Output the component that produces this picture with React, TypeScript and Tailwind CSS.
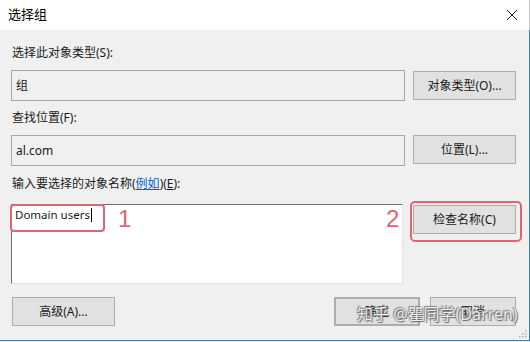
import React from "react";

const font = { fontFamily: '"Noto Sans", "Noto Sans CJK SC", sans-serif' };

function Btn({ children, className = "" }: { children: React.ReactNode; className?: string }) {
  return (
    <div
      className={`flex items-center justify-center bg-[#e1e1e1] border border-[#adadad] text-[12px] text-[#1a1a1a] ${className}`}
    >
      {children}
    </div>
  );
}

export default function App() {
  return (
    <div className="relative w-[530px] h-[342px] bg-[#f0f0f0] overflow-hidden" style={font}>
      {/* title bar */}
      <div className="h-[30px] bg-white flex items-center justify-between pl-[8px] pr-[10px] border-r border-[#c8c8c8]">
        <span className="text-[13px] text-black">选择组</span>
        <svg width="12" height="12" viewBox="0 0 12 12" className="mr-[1px]">
          <path d="M1 1L11 11M11 1L1 11" stroke="#222" strokeWidth="1" />
        </svg>
      </div>

      <div className="pl-[11px] pr-[14px] pt-[15px] flex flex-col text-[12px] text-[#1a1a1a]">
        <div className="h-[16px] leading-[16px] pl-[1px]">选择此对象类型(S):</div>
        <div className="mt-[9px] flex items-start gap-[8px]">
          <div className="w-[394px] h-[31px] border border-[#a8a8a8] bg-[#f0f0f0] pl-[4px] flex items-center">组</div>
          <Btn className="w-[103px] h-[29px] mt-[1px]">对象类型(O)...</Btn>
        </div>

        <div className="mt-[9px] h-[16px] leading-[16px] pl-[1px]">查找位置(F):</div>
        <div className="mt-[9px] flex items-start gap-[8px]">
          <div className="w-[394px] h-[31px] border border-[#a8a8a8] bg-[#f0f0f0] pl-[4px] flex items-center">al.com</div>
          <Btn className="w-[103px] h-[29px]">位置(L)...</Btn>
        </div>

        <div className="mt-[10px] h-[16px] leading-[16px] pl-[1px]">
          输入要选择的对象名称(
          <span className="text-[#0066cc] underline">例如</span>
          )(<span className="underline">E</span>):
        </div>
        <div className="mt-[12px] flex items-start gap-[10px]">
          <div className="relative w-[392px] h-[80px] bg-white border-l border-t border-[#707070] border-r border-r-[#e3e3e3] border-b border-b-[#e3e3e3]">
            <div className="absolute left-[3px] top-[2px] flex items-center h-[16px] text-[11.5px]">
              <span>Domain users</span>
              <span className="inline-block w-[1px] h-[14px] bg-black ml-[1px]" />
            </div>
          </div>
          <Btn className="w-[103px] h-[29px] mt-[1px]">检查名称(C)</Btn>
        </div>

        <div className="mt-[13px] flex items-start">
          <Btn className="w-[103px] h-[29px] ml-[1px]">高级(A)...</Btn>
          <div className="flex-1" />
          <Btn className="w-[86px] h-[29px] border-2 border-[#2c6fbd]">确定</Btn>
          <Btn className="w-[86px] h-[29px] ml-[10px]">取消</Btn>
        </div>
      </div>

      {/* red annotations */}
      <div className="absolute left-[10px] top-[204px] w-[95px] h-[28px] border-2 border-[#e06478] rounded-[4px]" />
      <div className="absolute left-[118px] top-[205px] text-[24px] leading-[28px] text-[#d96676] font-light" style={{ fontFamily: '"Liberation Sans", sans-serif' }}>1</div>
      <div className="absolute left-[410px] top-[201px] w-[112px] h-[41px] border-2 border-[#e06478] rounded-[5px]" />
      <div className="absolute left-[386px] top-[205px] text-[24px] leading-[28px] text-[#d96676] font-light" style={{ fontFamily: '"Liberation Sans", sans-serif' }}>2</div>

      {/* watermark */}
      <div
        className="absolute left-[357px] top-[303px] text-[16px] leading-[22px] text-white/90 whitespace-nowrap"
        style={{ textShadow: "0 0 1px #555, 1px 1px 1px #666, -1px -1px 1px #888" }}
      >
        知乎 @瞿同学(Darren)
      </div>

      {/* size grip */}
      <svg className="absolute right-[3px] bottom-[4px]" width="9" height="9" viewBox="0 0 9 9">
        <rect x="7" y="1" width="1.5" height="1.5" fill="#b0b0b0" />
        <rect x="4" y="4" width="1.5" height="1.5" fill="#b0b0b0" />
        <rect x="7" y="4" width="1.5" height="1.5" fill="#b0b0b0" />
        <rect x="1" y="7" width="1.5" height="1.5" fill="#b0b0b0" />
        <rect x="4" y="7" width="1.5" height="1.5" fill="#b0b0b0" />
        <rect x="7" y="7" width="1.5" height="1.5" fill="#b0b0b0" />
      </svg>

      {/* window border */}
      <div className="absolute left-0 right-0 bottom-[1px] h-[1px] bg-[#3c7fb1]" />
      <div className="absolute top-[30px] right-0 bottom-[1px] w-[1px] bg-[#3c7fb1]" />
    </div>
  );
}
